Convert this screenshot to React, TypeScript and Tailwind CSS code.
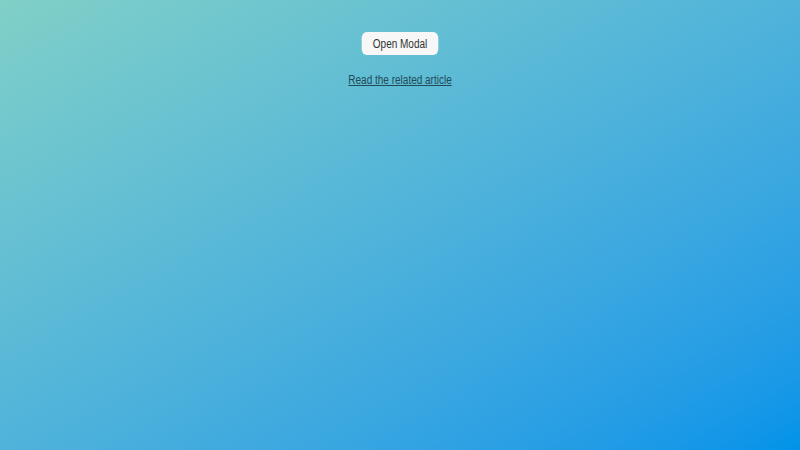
export default function App() {
  return (
    <main
      className="flex min-h-[450px] flex-col items-center bg-gradient-to-br from-[#80d0c7] to-[#0093e9] pt-8"
      style={{ fontFamily: '"Liberation Sans", Arial, sans-serif' }}
    >
      {/* narrow set type, squeezed horizontally */}
      <div className="flex scale-x-[0.8333] flex-col items-center">
        <button className="h-[23px] rounded-[6px] bg-[#f7f7f7] px-[13px] text-[12px] text-[#333]">
          Open Modal
        </button>
        <a href="#" className="mt-[16px] text-[12px] text-[#214a58] underline">
          Read the related article
        </a>
      </div>
    </main>
  );
}
